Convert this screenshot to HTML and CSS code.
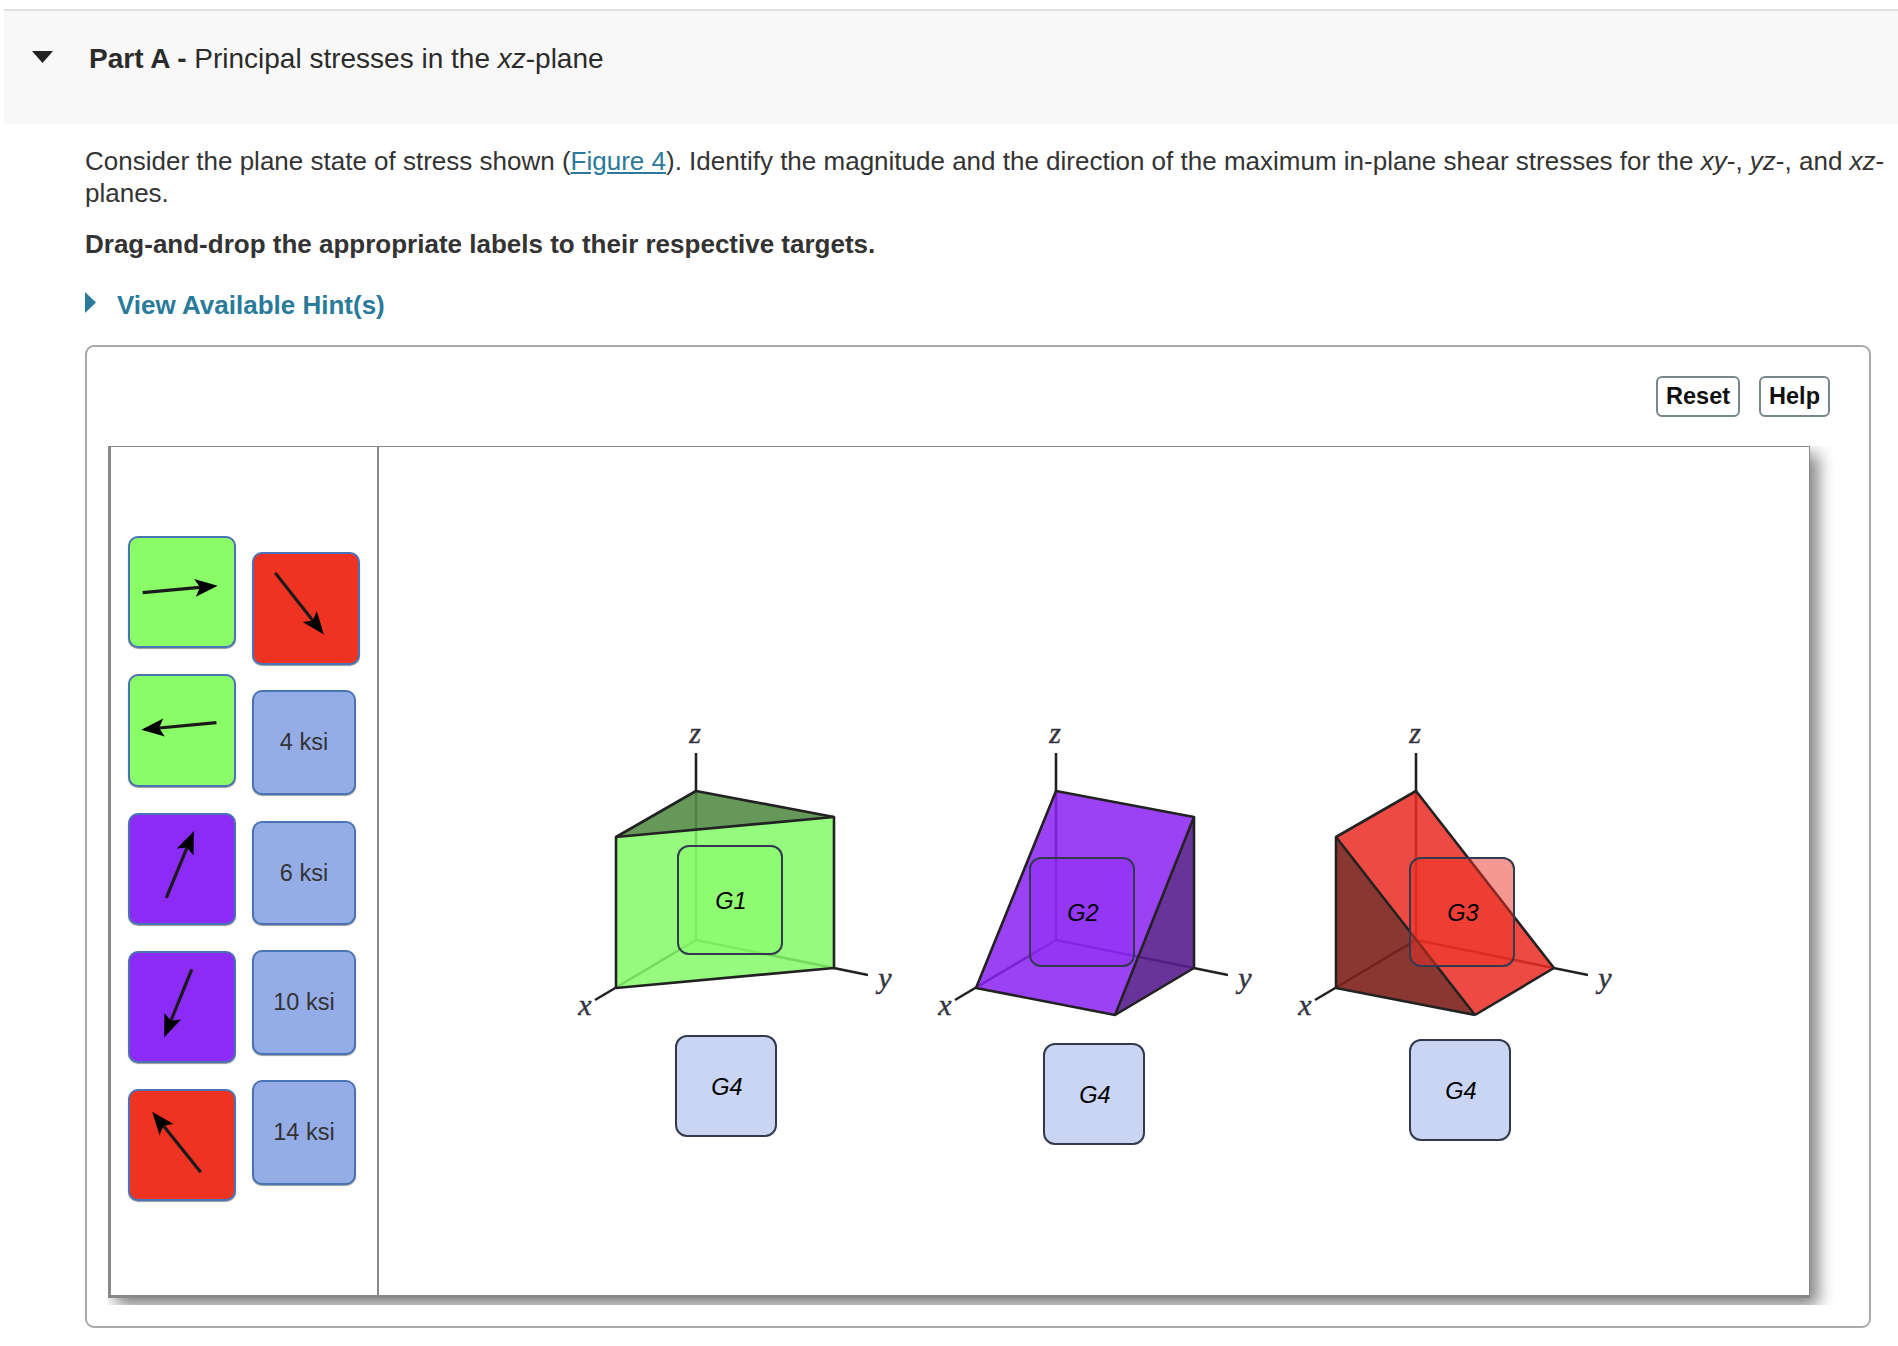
FILE: index.html
```html
<!DOCTYPE html>
<html lang="en">
<head>
<meta charset="utf-8">
<title>Part A</title>
<link rel="stylesheet" href="styles.css">
</head>
<body>
<section class="part">
  <header class="part-head">
    <svg class="caret" viewBox="0 0 21 12"><polygon points="0,0 21,0 10.5,12"/></svg>
    <h2 class="part-title"><b>Part A -</b> Principal stresses in the <i>xz</i>-plane</h2>
  </header>
  <div class="part-body">
    <p class="intro">Consider the plane state of stress shown (<a href="#">Figure 4</a>). Identify the magnitude and the direction of the maximum in-plane shear stresses for the <i>xy</i>-, <i>yz</i>-, and <i>xz</i>-planes.</p>
    <p class="task">Drag-and-drop the appropriate labels to their respective targets.</p>
    <div class="hint">
      <svg class="hint-caret" viewBox="0 0 11 21"><polygon points="0,0 11,10.5 0,21"/></svg>
      <span>View Available Hint(s)</span>
    </div>
    <div class="applet">
      <div class="toolbar">
        <button class="btn">Reset</button>
        <button class="btn">Help</button>
      </div>
      <div class="panel-clip">
        <div class="panel">
          <div class="palette">
            <div class="col col-a">
              <div class="tile tile-arrow green"><svg viewBox="0 0 104 109"><g transform="translate(88 48) rotate(-5.3)"><line x1="-76" y1="0" x2="-10" y2="0"/><polygon points="0,0 -23,-9 -18,0 -23,9"/></g></svg></div>
              <div class="tile tile-arrow green"><svg viewBox="0 0 104 109"><g transform="translate(11 54) rotate(174.7)"><line x1="-76" y1="0" x2="-10" y2="0"/><polygon points="0,0 -23,-9 -18,0 -23,9"/></g></svg></div>
              <div class="tile tile-arrow purple"><svg viewBox="0 0 104 109"><g transform="translate(64 16) rotate(-67.6)"><line x1="-73" y1="0" x2="-10" y2="0"/><polygon points="0,0 -23,-9 -18,0 -23,9"/></g></svg></div>
              <div class="tile tile-arrow purple"><svg viewBox="0 0 104 109"><g transform="translate(34 85) rotate(112.1)"><line x1="-74" y1="0" x2="-10" y2="0"/><polygon points="0,0 -23,-9 -18,0 -23,9"/></g></svg></div>
              <div class="tile tile-arrow red"><svg viewBox="0 0 104 109"><g transform="translate(22 21) rotate(231.2)"><line x1="-78" y1="0" x2="-10" y2="0"/><polygon points="0,0 -23,-9 -18,0 -23,9"/></g></svg></div>
            </div>
            <div class="col col-b">
              <div class="tile tile-arrow red"><svg viewBox="0 0 104 109"><g transform="translate(70 81) rotate(51.7)"><line x1="-79" y1="0" x2="-10" y2="0"/><polygon points="0,0 -23,-9 -18,0 -23,9"/></g></svg></div>
              <div class="tile tile-text">4 ksi</div>
              <div class="tile tile-text tile-short">6 ksi</div>
              <div class="tile tile-text">10 ksi</div>
              <div class="tile tile-text">14 ksi</div>
            </div>
          </div>
          <div class="stage">
            <svg class="figures" viewBox="379 447 1431 848">
              <defs>
                <g id="axes">
                  <line x1="696" y1="753" x2="696" y2="940"/>
                  <line x1="696" y1="940" x2="595" y2="1000"/>
                  <line x1="696" y1="940" x2="868" y2="975"/>
                </g>
              </defs>
              <g class="fig">
                <use href="#axes"/>
                <polygon class="fdark" fill="#558d48" points="616,837 696,791 834,817"/>
                <polygon class="flight" fill="#82f967" points="616,837 834,817 834,968 616,988"/>
                <polyline points="616,988 616,837 696,791 834,817 834,968 616,988"/>
                <line x1="616" y1="837" x2="834" y2="817"/>
                <text x="695" y="743">z</text>
                <text x="585" y="1015">x</text>
                <text x="885" y="988">y</text>
              </g>
              <g class="fig" transform="translate(360 0)">
                <use href="#axes"/>
                <polygon class="fdark" fill="#581e8f" points="834,817 834,968 755,1015"/>
                <polygon class="flight" fill="#8a21f2" points="696,791 834,817 755,1015 616,988"/>
                <polyline points="616,988 696,791 834,817 834,968 755,1015 616,988"/>
                <line x1="834" y1="817" x2="755" y2="1015"/>
                <text x="695" y="743">z</text>
                <text x="585" y="1015">x</text>
                <text x="885" y="988">y</text>
              </g>
              <g class="fig" transform="translate(720 0)">
                <use href="#axes"/>
                <polygon class="fdark" fill="#7d211c" points="616,837 616,988 755,1015"/>
                <polygon class="flight" fill="#eb2a23" points="616,837 696,791 834,968 755,1015"/>
                <polyline points="755,1015 616,988 616,837 696,791 834,968 755,1015"/>
                <line x1="616" y1="837" x2="755" y2="1015"/>
                <text x="695" y="743">z</text>
                <text x="585" y="1015">x</text>
                <text x="885" y="988">y</text>
              </g>
            </svg>
            <div class="zone zone-g1">G1</div>
            <div class="zone zone-g2">G2</div>
            <div class="zone zone-g3">G3</div>
            <div class="zone zone-b zone-b1">G4</div>
            <div class="zone zone-b zone-b2">G4</div>
            <div class="zone zone-b zone-b3">G4</div>
          </div>
        </div>
      </div>
    </div>
  </div>
</section>
</body>
</html>
```
FILE: styles.css
```css
* { box-sizing: border-box; }
html, body { margin: 0; padding: 0; background: #fff; }
body { font-family: "Liberation Sans", Arial, sans-serif; color: #333; height: 1346px; overflow: hidden; }

.part { margin: 9px 0 0 4px; border-top: 2px solid #e0e0e0; }
.part-head { height: 113px; background: #f8f8f8; display: flex; align-items: flex-start; position: relative; padding: 31px 0 0 85px; }
.caret { position: absolute; left: 28px; top: 40px; width: 21px; height: 12px; fill: #222; }
.part-title { margin: 0; font-size: 28px; line-height: 34px; font-weight: 400; color: #2b2b2b; }
.part-title b { font-weight: 700; }

.part-body { padding: 21px 0 0 81px; }
.intro { margin: 0; font-size: 26px; line-height: 32px; width: 1810px; color: #333; }
.intro a { color: #2a7a9b; text-decoration: underline; }
.task { margin: 19px 0 0; font-size: 26px; line-height: 32px; font-weight: 700; color: #333; }
.hint { display: flex; align-items: center; gap: 21px; margin-top: 29px; height: 32px; color: #2a7a9b; font-size: 26px; font-weight: 700; }
.hint-caret { width: 11px; height: 21px; fill: #2a7a9b; margin-top: -6px; }

.applet { margin-top: 24px; width: 1786px; height: 983px; border: 2px solid #aaa; border-radius: 9px; padding: 0 0 0 21px; background: #fff; }
.toolbar { display: flex; justify-content: flex-end; gap: 19px; padding: 29px 39px 0 0; height: 99px; }
.btn { height: 41px; padding: 0 8px; background: #fff; border: 2px solid #78878c; border-radius: 6px; font: 700 23.5px "Liberation Sans", Arial, sans-serif; color: #111; }

.panel-clip { width: 1728px; height: 859px; overflow: hidden; }
.panel { display: flex; width: 1702px; height: 852px; background: #fff; border-style: solid; border-color: #888; border-width: 1px 1px 3px 3px; box-shadow: 8px 8px 16px #808080; }

.palette { width: 268px; flex: none; border-right: 2px solid #888; display: flex; gap: 16px; padding: 89px 0 0 17px; }
.col { display: flex; flex-direction: column; width: 108px; flex: none; }
.col-a { gap: 26px; }
.col-b { gap: 25px; padding-top: 16px; }
.tile { border: 2px solid #4a73b5; border-radius: 10px; box-shadow: 0 1px 1px #999; }
.tile-arrow { width: 108px; height: 112.25px; }
.tile-arrow svg { display: block; width: 104px; height: 108.25px; }
.tile-arrow line { stroke: #1a1a1a; stroke-width: 3.2; }
.tile-arrow polygon { fill: #000; }
.col-b .tile-arrow { height: 113px; }
.green { background: #8afc68; }
.purple { background: #8b2bf5; }
.red { background: #ee3323; }
.tile-text { width: 104px; height: 105px; background: #95ade7; display: flex; align-items: center; justify-content: center; font-size: 23.5px; color: #333; }
.tile-short { height: 104px; margin-top: 1px; }

.stage { position: relative; flex: 1; }
.figures { display: block; width: 1431px; height: 848px; }
.figures line, .figures polyline { stroke: #222; stroke-width: 2.6; fill: none; }
.flight { opacity: .85; }
.fdark { opacity: .9; }
.fig polyline { stroke-linejoin: round; }
.fig text { font: italic 30px "Liberation Serif", serif; fill: #333340; text-anchor: middle; stroke: #333340; stroke-width: .4; }

.zone { position: absolute; width: 106px; height: 110px; border: 2px solid #333a50; border-radius: 12px; display: flex; align-items: center; justify-content: center; font-size: 23.5px; font-style: italic; color: #000; padding: 3px 0 0 2px; }
.zone-g1 { left: 298px; top: 398px; background: rgba(136, 251, 102, .5); }
.zone-g2 { left: 650px; top: 410px; background: rgba(139, 43, 245, .5); }
.zone-g3 { left: 1030px; top: 410px; background: rgba(238, 50, 35, .5); }
.zone-b { width: 102px; height: 102px; background: rgba(147, 172, 230, .5); }
.zone-b1 { left: 296px; top: 588px; }
.zone-b2 { left: 664px; top: 596px; }
.zone-b3 { left: 1030px; top: 592px; }
```
